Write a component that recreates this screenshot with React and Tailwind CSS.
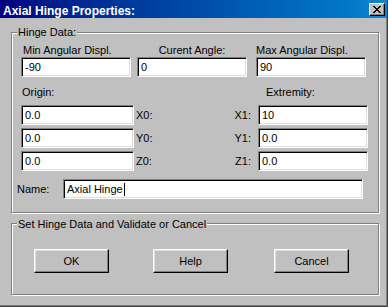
import React from "react";

function Field({ w, value, caret }) {
  return (
    <div
      className={`${w} h-[20px] bg-white border border-t-[#808080] border-l-[#808080] border-b-white border-r-white shadow-[inset_1px_1px_0_#000,inset_-1px_-1px_0_#dfdfdf] pl-[3px] flex items-center text-black whitespace-nowrap`}
    >
      <span>{value}</span>
      {caret && <span className="inline-block w-[1px] h-[13px] bg-black ml-[1px]" />}
    </div>
  );
}

function Button({ children, className = "" }) {
  return (
    <div
      className={`w-[75px] h-[24px] bg-[#c0c0c0] border border-t-white border-l-white border-b-black border-r-black shadow-[inset_-1px_-1px_0_#808080,inset_1px_1px_0_#dfdfdf] flex items-center justify-center ${className}`}
    >
      {children}
    </div>
  );
}

function CloseGlyph() {
  const px = [
    [0, 0], [1, 0], [6, 0], [7, 0],
    [1, 1], [2, 1], [5, 1], [6, 1],
    [2, 2], [3, 2], [4, 2], [5, 2],
    [3, 3], [4, 3],
    [2, 4], [3, 4], [4, 4], [5, 4],
    [1, 5], [2, 5], [5, 5], [6, 5],
    [0, 6], [1, 6], [6, 6], [7, 6],
  ];
  return (
    <svg width="8" height="7" viewBox="0 0 8 7" shapeRendering="crispEdges">
      {px.map(([x, y], i) => (
        <rect key={i} x={x} y={y} width="1" height="1" fill="#000" />
      ))}
    </svg>
  );
}

export default function App() {
  return (
    <div className="w-[388px] h-[307px] bg-[#c0c0c0] flex flex-col border-r border-b border-r-[#404040] border-b-[#404040] shadow-[inset_-1px_-1px_0_#808080] overflow-hidden font-['Liberation_Sans',Arial,sans-serif] text-[11px] leading-[13px] text-black">
      {/* Title bar */}
      <div className="h-[18px] flex justify-between bg-gradient-to-r from-[#000080] to-[#1084d0]">
        <div className="pl-[3px] pt-[5px] text-[12px] leading-[13px] font-bold text-white whitespace-nowrap">
          Axial Hinge Properties:
        </div>
        <div className="mt-[3px] mr-[2px] w-[16px] h-[13px] bg-[#c0c0c0] border border-t-white border-l-white border-b-black border-r-black shadow-[inset_-1px_-1px_0_#808080] flex items-center justify-center">
          <CloseGlyph />
        </div>
      </div>

      {/* Hinge Data group */}
      <div className="relative mt-[14px] ml-[11px] w-[368px] h-[181px] border border-[#808080] shadow-[inset_1px_1px_0_#fff,1px_1px_0_#fff] flex flex-col">
        <span className="absolute left-[5px] -top-[7px] bg-[#c0c0c0] pl-[1px] pr-[1px] whitespace-nowrap">
          Hinge Data:
        </span>

        <div className="flex mt-[11px] ml-[9px]">
          <div className="w-[110px] flex flex-col">
            <div className="pl-[2px] h-[13px] whitespace-nowrap">Min Angular Displ.</div>
            <Field w="w-[110px]" value="-90" />
          </div>
          <div className="w-[110px] ml-[6px] flex flex-col">
            <div className="text-center h-[13px] whitespace-nowrap">Curent Angle:</div>
            <Field w="w-[110px]" value="0" />
          </div>
          <div className="w-[110px] ml-[9px] flex flex-col">
            <div className="h-[13px] whitespace-nowrap">Max Angular Displ.</div>
            <Field w="w-[110px]" value="90" />
          </div>
        </div>

        <div className="flex mt-[9px] ml-[10px]">
          <div className="w-[244px]">Origin:</div>
          <div>Extremity:</div>
        </div>

        <div className="flex items-center mt-[6px] ml-[9px]">
          <Field w="w-[113px]" value="0.0" />
          <div className="w-[124px] flex justify-between pl-[2px] pr-[7px]">
            <span>X0:</span>
            <span>X1:</span>
          </div>
          <Field w="w-[110px]" value="10" />
        </div>
        <div className="flex items-center mt-[3px] ml-[9px]">
          <Field w="w-[113px]" value="0.0" />
          <div className="w-[124px] flex justify-between pl-[2px] pr-[7px]">
            <span>Y0:</span>
            <span>Y1:</span>
          </div>
          <Field w="w-[110px]" value="0.0" />
        </div>
        <div className="flex items-center mt-[3px] ml-[9px]">
          <Field w="w-[113px]" value="0.0" />
          <div className="w-[124px] flex justify-between pl-[2px] pr-[7px]">
            <span>Z0:</span>
            <span>Z1:</span>
          </div>
          <Field w="w-[110px]" value="0.0" />
        </div>

        <div className="flex items-center mt-[8px] ml-[5px]">
          <div className="w-[46px]">Name:</div>
          <Field w="w-[300px]" value="Axial Hinge" caret />
        </div>
      </div>

      {/* Validate group */}
      <div className="relative mt-[10px] ml-[11px] w-[368px] h-[72px] border border-[#808080] shadow-[inset_1px_1px_0_#fff,1px_1px_0_#fff] flex flex-col">
        <span className="absolute left-[5px] -top-[6px] bg-[#c0c0c0] pl-[1px] pr-[1px] whitespace-nowrap">
          Set Hinge Data and Validate or Cancel
        </span>
        <div className="flex mt-[25px] ml-[22px]">
          <Button>OK</Button>
          <Button className="ml-[44px]">Help</Button>
          <Button className="ml-[46px]">Cancel</Button>
        </div>
      </div>
    </div>
  );
}
